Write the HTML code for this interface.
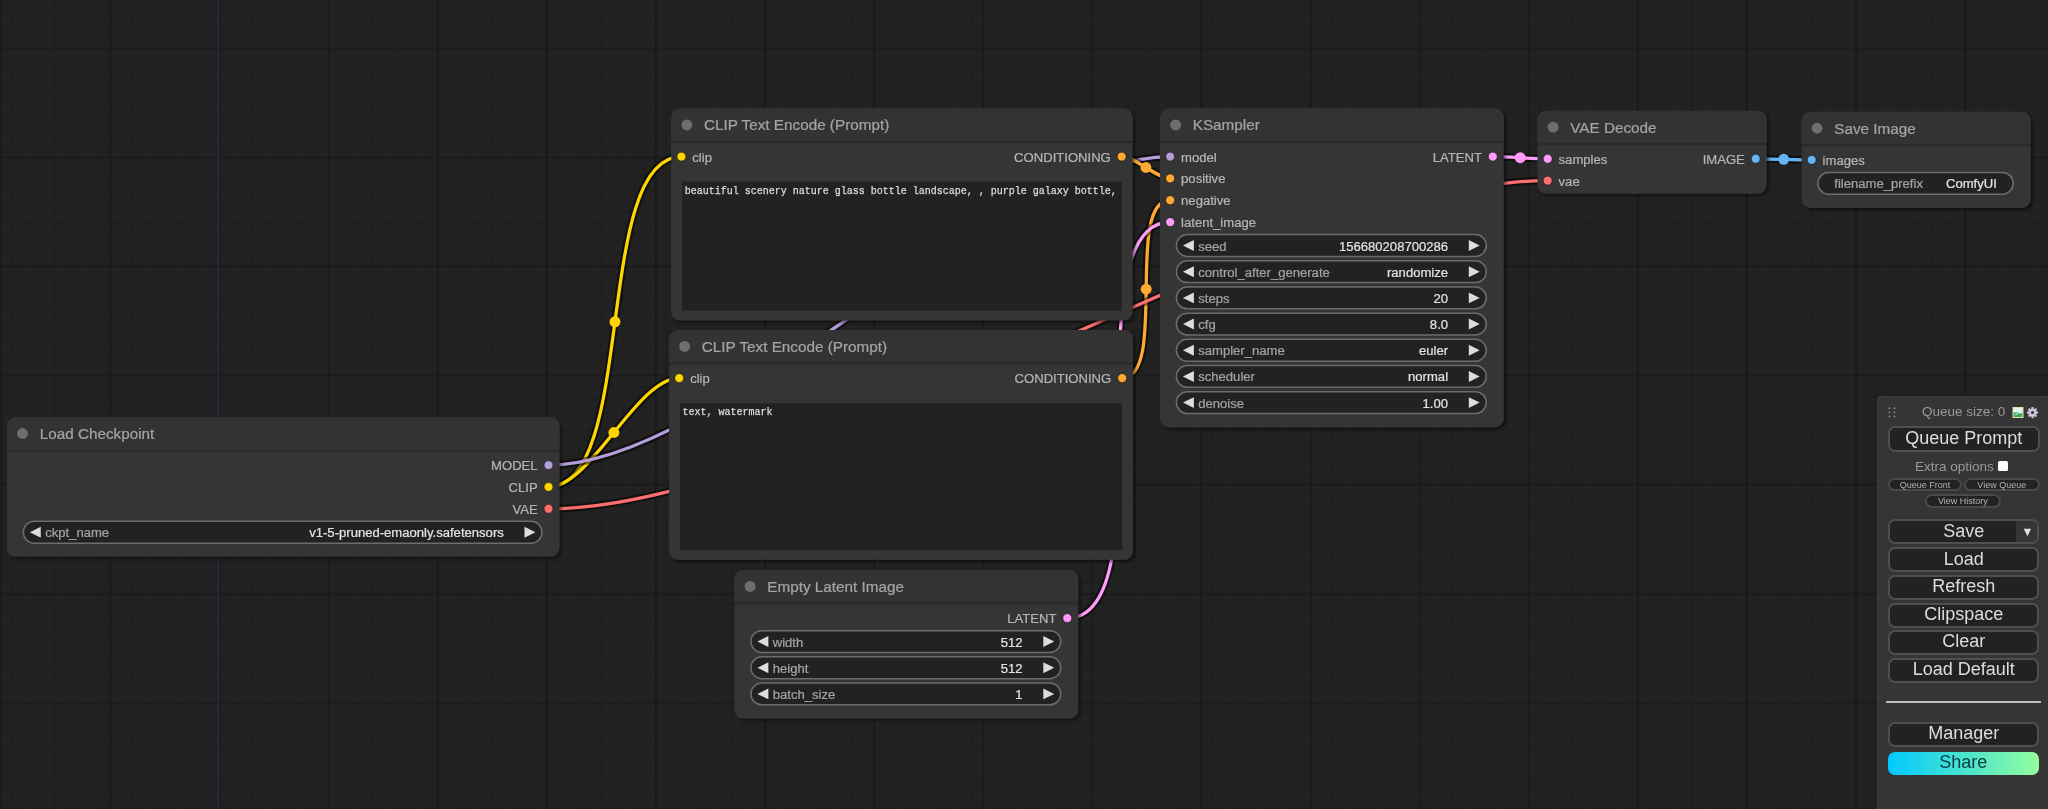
<!DOCTYPE html><html><head><meta charset="utf-8"><style>
html,body{margin:0;padding:0;width:2048px;height:809px;overflow:hidden;background:#222;} body{filter:blur(0.35px);}
svg{position:absolute;left:0;top:0;} .ct{stroke-width:0.22px;paint-order:stroke;}
.menu{position:absolute;font-family:"Liberation Sans",sans-serif;}
</style></head><body>
<svg width="2048" height="809" viewBox="0 0 2048 809">
<defs><filter id="sh" x="-5%" y="-5%" width="110%" height="115%"><feDropShadow dx="2" dy="2" stdDeviation="1.5" flood-color="#000" flood-opacity="0.5"/></filter></defs>
<rect width="2048" height="809" fill="#222"/>
<g><rect x="-21.52" y="0" width="1.09" height="809" fill="#1f1f1f"/><rect x="-10.61" y="0" width="1.09" height="809" fill="#1f1f1f"/><rect x="0.3" y="0" width="1.09" height="809" fill="#1a1a1a"/><rect x="1.39" y="0" width="1.09" height="809" fill="#1b1b1b"/><rect x="11.21" y="0" width="1.09" height="809" fill="#1f1f1f"/><rect x="22.12" y="0" width="1.09" height="809" fill="#1f1f1f"/><rect x="33.03" y="0" width="1.09" height="809" fill="#1f1f1f"/><rect x="43.94" y="0" width="1.09" height="809" fill="#1f1f1f"/><rect x="54.85" y="0" width="1.09" height="809" fill="#1f1f1f"/><rect x="65.76" y="0" width="1.09" height="809" fill="#1f1f1f"/><rect x="76.67" y="0" width="1.09" height="809" fill="#1f1f1f"/><rect x="87.58" y="0" width="1.09" height="809" fill="#1f1f1f"/><rect x="98.49" y="0" width="1.09" height="809" fill="#1f1f1f"/><rect x="109.4" y="0" width="1.09" height="809" fill="#1a1a1a"/><rect x="110.49" y="0" width="1.09" height="809" fill="#1b1b1b"/><rect x="120.31" y="0" width="1.09" height="809" fill="#1f1f1f"/><rect x="131.22" y="0" width="1.09" height="809" fill="#1f1f1f"/><rect x="142.13" y="0" width="1.09" height="809" fill="#1f1f1f"/><rect x="153.04" y="0" width="1.09" height="809" fill="#1f1f1f"/><rect x="163.95" y="0" width="1.09" height="809" fill="#1f1f1f"/><rect x="174.86" y="0" width="1.09" height="809" fill="#1f1f1f"/><rect x="185.77" y="0" width="1.09" height="809" fill="#1f1f1f"/><rect x="196.68" y="0" width="1.09" height="809" fill="#1f1f1f"/><rect x="207.59" y="0" width="1.09" height="809" fill="#1f1f1f"/><rect x="218.5" y="0" width="1.09" height="809" fill="#1a1a1a"/><rect x="219.59" y="0" width="1.09" height="809" fill="#1b1b1b"/><rect x="229.41" y="0" width="1.09" height="809" fill="#1f1f1f"/><rect x="240.32" y="0" width="1.09" height="809" fill="#1f1f1f"/><rect x="251.23" y="0" width="1.09" height="809" fill="#1f1f1f"/><rect x="262.14" y="0" width="1.09" height="809" fill="#1f1f1f"/><rect x="273.05" y="0" width="1.09" height="809" fill="#1f1f1f"/><rect x="283.96" y="0" width="1.09" height="809" fill="#1f1f1f"/><rect x="294.87" y="0" width="1.09" height="809" fill="#1f1f1f"/><rect x="305.78" y="0" width="1.09" height="809" fill="#1f1f1f"/><rect x="316.69" y="0" width="1.09" height="809" fill="#1f1f1f"/><rect x="327.6" y="0" width="1.09" height="809" fill="#1a1a1a"/><rect x="328.69" y="0" width="1.09" height="809" fill="#1b1b1b"/><rect x="338.51" y="0" width="1.09" height="809" fill="#1f1f1f"/><rect x="349.42" y="0" width="1.09" height="809" fill="#1f1f1f"/><rect x="360.33" y="0" width="1.09" height="809" fill="#1f1f1f"/><rect x="371.24" y="0" width="1.09" height="809" fill="#1f1f1f"/><rect x="382.15" y="0" width="1.09" height="809" fill="#1f1f1f"/><rect x="393.06" y="0" width="1.09" height="809" fill="#1f1f1f"/><rect x="403.97" y="0" width="1.09" height="809" fill="#1f1f1f"/><rect x="414.88" y="0" width="1.09" height="809" fill="#1f1f1f"/><rect x="425.79" y="0" width="1.09" height="809" fill="#1f1f1f"/><rect x="436.7" y="0" width="1.09" height="809" fill="#1a1a1a"/><rect x="437.79" y="0" width="1.09" height="809" fill="#1b1b1b"/><rect x="447.61" y="0" width="1.09" height="809" fill="#1f1f1f"/><rect x="458.52" y="0" width="1.09" height="809" fill="#1f1f1f"/><rect x="469.43" y="0" width="1.09" height="809" fill="#1f1f1f"/><rect x="480.34" y="0" width="1.09" height="809" fill="#1f1f1f"/><rect x="491.25" y="0" width="1.09" height="809" fill="#1f1f1f"/><rect x="502.16" y="0" width="1.09" height="809" fill="#1f1f1f"/><rect x="513.07" y="0" width="1.09" height="809" fill="#1f1f1f"/><rect x="523.98" y="0" width="1.09" height="809" fill="#1f1f1f"/><rect x="534.89" y="0" width="1.09" height="809" fill="#1f1f1f"/><rect x="545.8" y="0" width="1.09" height="809" fill="#1a1a1a"/><rect x="546.89" y="0" width="1.09" height="809" fill="#1b1b1b"/><rect x="556.71" y="0" width="1.09" height="809" fill="#1f1f1f"/><rect x="567.62" y="0" width="1.09" height="809" fill="#1f1f1f"/><rect x="578.53" y="0" width="1.09" height="809" fill="#1f1f1f"/><rect x="589.44" y="0" width="1.09" height="809" fill="#1f1f1f"/><rect x="600.35" y="0" width="1.09" height="809" fill="#1f1f1f"/><rect x="611.26" y="0" width="1.09" height="809" fill="#1f1f1f"/><rect x="622.17" y="0" width="1.09" height="809" fill="#1f1f1f"/><rect x="633.08" y="0" width="1.09" height="809" fill="#1f1f1f"/><rect x="643.99" y="0" width="1.09" height="809" fill="#1f1f1f"/><rect x="654.9" y="0" width="1.09" height="809" fill="#1a1a1a"/><rect x="655.99" y="0" width="1.09" height="809" fill="#1b1b1b"/><rect x="665.81" y="0" width="1.09" height="809" fill="#1f1f1f"/><rect x="676.72" y="0" width="1.09" height="809" fill="#1f1f1f"/><rect x="687.63" y="0" width="1.09" height="809" fill="#1f1f1f"/><rect x="698.54" y="0" width="1.09" height="809" fill="#1f1f1f"/><rect x="709.45" y="0" width="1.09" height="809" fill="#1f1f1f"/><rect x="720.36" y="0" width="1.09" height="809" fill="#1f1f1f"/><rect x="731.27" y="0" width="1.09" height="809" fill="#1f1f1f"/><rect x="742.18" y="0" width="1.09" height="809" fill="#1f1f1f"/><rect x="753.09" y="0" width="1.09" height="809" fill="#1f1f1f"/><rect x="764" y="0" width="1.09" height="809" fill="#1a1a1a"/><rect x="765.09" y="0" width="1.09" height="809" fill="#1b1b1b"/><rect x="774.91" y="0" width="1.09" height="809" fill="#1f1f1f"/><rect x="785.82" y="0" width="1.09" height="809" fill="#1f1f1f"/><rect x="796.73" y="0" width="1.09" height="809" fill="#1f1f1f"/><rect x="807.64" y="0" width="1.09" height="809" fill="#1f1f1f"/><rect x="818.55" y="0" width="1.09" height="809" fill="#1f1f1f"/><rect x="829.46" y="0" width="1.09" height="809" fill="#1f1f1f"/><rect x="840.37" y="0" width="1.09" height="809" fill="#1f1f1f"/><rect x="851.28" y="0" width="1.09" height="809" fill="#1f1f1f"/><rect x="862.19" y="0" width="1.09" height="809" fill="#1f1f1f"/><rect x="873.1" y="0" width="1.09" height="809" fill="#1a1a1a"/><rect x="874.19" y="0" width="1.09" height="809" fill="#1b1b1b"/><rect x="884.01" y="0" width="1.09" height="809" fill="#1f1f1f"/><rect x="894.92" y="0" width="1.09" height="809" fill="#1f1f1f"/><rect x="905.83" y="0" width="1.09" height="809" fill="#1f1f1f"/><rect x="916.74" y="0" width="1.09" height="809" fill="#1f1f1f"/><rect x="927.65" y="0" width="1.09" height="809" fill="#1f1f1f"/><rect x="938.56" y="0" width="1.09" height="809" fill="#1f1f1f"/><rect x="949.47" y="0" width="1.09" height="809" fill="#1f1f1f"/><rect x="960.38" y="0" width="1.09" height="809" fill="#1f1f1f"/><rect x="971.29" y="0" width="1.09" height="809" fill="#1f1f1f"/><rect x="982.2" y="0" width="1.09" height="809" fill="#1a1a1a"/><rect x="983.29" y="0" width="1.09" height="809" fill="#1b1b1b"/><rect x="993.11" y="0" width="1.09" height="809" fill="#1f1f1f"/><rect x="1004.02" y="0" width="1.09" height="809" fill="#1f1f1f"/><rect x="1014.93" y="0" width="1.09" height="809" fill="#1f1f1f"/><rect x="1025.84" y="0" width="1.09" height="809" fill="#1f1f1f"/><rect x="1036.75" y="0" width="1.09" height="809" fill="#1f1f1f"/><rect x="1047.66" y="0" width="1.09" height="809" fill="#1f1f1f"/><rect x="1058.57" y="0" width="1.09" height="809" fill="#1f1f1f"/><rect x="1069.48" y="0" width="1.09" height="809" fill="#1f1f1f"/><rect x="1080.39" y="0" width="1.09" height="809" fill="#1f1f1f"/><rect x="1091.3" y="0" width="1.09" height="809" fill="#1a1a1a"/><rect x="1092.39" y="0" width="1.09" height="809" fill="#1b1b1b"/><rect x="1102.21" y="0" width="1.09" height="809" fill="#1f1f1f"/><rect x="1113.12" y="0" width="1.09" height="809" fill="#1f1f1f"/><rect x="1124.03" y="0" width="1.09" height="809" fill="#1f1f1f"/><rect x="1134.94" y="0" width="1.09" height="809" fill="#1f1f1f"/><rect x="1145.85" y="0" width="1.09" height="809" fill="#1f1f1f"/><rect x="1156.76" y="0" width="1.09" height="809" fill="#1f1f1f"/><rect x="1167.67" y="0" width="1.09" height="809" fill="#1f1f1f"/><rect x="1178.58" y="0" width="1.09" height="809" fill="#1f1f1f"/><rect x="1189.49" y="0" width="1.09" height="809" fill="#1f1f1f"/><rect x="1200.4" y="0" width="1.09" height="809" fill="#1a1a1a"/><rect x="1201.49" y="0" width="1.09" height="809" fill="#1b1b1b"/><rect x="1211.31" y="0" width="1.09" height="809" fill="#1f1f1f"/><rect x="1222.22" y="0" width="1.09" height="809" fill="#1f1f1f"/><rect x="1233.13" y="0" width="1.09" height="809" fill="#1f1f1f"/><rect x="1244.04" y="0" width="1.09" height="809" fill="#1f1f1f"/><rect x="1254.95" y="0" width="1.09" height="809" fill="#1f1f1f"/><rect x="1265.86" y="0" width="1.09" height="809" fill="#1f1f1f"/><rect x="1276.77" y="0" width="1.09" height="809" fill="#1f1f1f"/><rect x="1287.68" y="0" width="1.09" height="809" fill="#1f1f1f"/><rect x="1298.59" y="0" width="1.09" height="809" fill="#1f1f1f"/><rect x="1309.5" y="0" width="1.09" height="809" fill="#1a1a1a"/><rect x="1310.59" y="0" width="1.09" height="809" fill="#1b1b1b"/><rect x="1320.41" y="0" width="1.09" height="809" fill="#1f1f1f"/><rect x="1331.32" y="0" width="1.09" height="809" fill="#1f1f1f"/><rect x="1342.23" y="0" width="1.09" height="809" fill="#1f1f1f"/><rect x="1353.14" y="0" width="1.09" height="809" fill="#1f1f1f"/><rect x="1364.05" y="0" width="1.09" height="809" fill="#1f1f1f"/><rect x="1374.96" y="0" width="1.09" height="809" fill="#1f1f1f"/><rect x="1385.87" y="0" width="1.09" height="809" fill="#1f1f1f"/><rect x="1396.78" y="0" width="1.09" height="809" fill="#1f1f1f"/><rect x="1407.69" y="0" width="1.09" height="809" fill="#1f1f1f"/><rect x="1418.6" y="0" width="1.09" height="809" fill="#1a1a1a"/><rect x="1419.69" y="0" width="1.09" height="809" fill="#1b1b1b"/><rect x="1429.51" y="0" width="1.09" height="809" fill="#1f1f1f"/><rect x="1440.42" y="0" width="1.09" height="809" fill="#1f1f1f"/><rect x="1451.33" y="0" width="1.09" height="809" fill="#1f1f1f"/><rect x="1462.24" y="0" width="1.09" height="809" fill="#1f1f1f"/><rect x="1473.15" y="0" width="1.09" height="809" fill="#1f1f1f"/><rect x="1484.06" y="0" width="1.09" height="809" fill="#1f1f1f"/><rect x="1494.97" y="0" width="1.09" height="809" fill="#1f1f1f"/><rect x="1505.88" y="0" width="1.09" height="809" fill="#1f1f1f"/><rect x="1516.79" y="0" width="1.09" height="809" fill="#1f1f1f"/><rect x="1527.7" y="0" width="1.09" height="809" fill="#1a1a1a"/><rect x="1528.79" y="0" width="1.09" height="809" fill="#1b1b1b"/><rect x="1538.61" y="0" width="1.09" height="809" fill="#1f1f1f"/><rect x="1549.52" y="0" width="1.09" height="809" fill="#1f1f1f"/><rect x="1560.43" y="0" width="1.09" height="809" fill="#1f1f1f"/><rect x="1571.34" y="0" width="1.09" height="809" fill="#1f1f1f"/><rect x="1582.25" y="0" width="1.09" height="809" fill="#1f1f1f"/><rect x="1593.16" y="0" width="1.09" height="809" fill="#1f1f1f"/><rect x="1604.07" y="0" width="1.09" height="809" fill="#1f1f1f"/><rect x="1614.98" y="0" width="1.09" height="809" fill="#1f1f1f"/><rect x="1625.89" y="0" width="1.09" height="809" fill="#1f1f1f"/><rect x="1636.8" y="0" width="1.09" height="809" fill="#1a1a1a"/><rect x="1637.89" y="0" width="1.09" height="809" fill="#1b1b1b"/><rect x="1647.71" y="0" width="1.09" height="809" fill="#1f1f1f"/><rect x="1658.62" y="0" width="1.09" height="809" fill="#1f1f1f"/><rect x="1669.53" y="0" width="1.09" height="809" fill="#1f1f1f"/><rect x="1680.44" y="0" width="1.09" height="809" fill="#1f1f1f"/><rect x="1691.35" y="0" width="1.09" height="809" fill="#1f1f1f"/><rect x="1702.26" y="0" width="1.09" height="809" fill="#1f1f1f"/><rect x="1713.17" y="0" width="1.09" height="809" fill="#1f1f1f"/><rect x="1724.08" y="0" width="1.09" height="809" fill="#1f1f1f"/><rect x="1734.99" y="0" width="1.09" height="809" fill="#1f1f1f"/><rect x="1745.9" y="0" width="1.09" height="809" fill="#1a1a1a"/><rect x="1746.99" y="0" width="1.09" height="809" fill="#1b1b1b"/><rect x="1756.81" y="0" width="1.09" height="809" fill="#1f1f1f"/><rect x="1767.72" y="0" width="1.09" height="809" fill="#1f1f1f"/><rect x="1778.63" y="0" width="1.09" height="809" fill="#1f1f1f"/><rect x="1789.54" y="0" width="1.09" height="809" fill="#1f1f1f"/><rect x="1800.45" y="0" width="1.09" height="809" fill="#1f1f1f"/><rect x="1811.36" y="0" width="1.09" height="809" fill="#1f1f1f"/><rect x="1822.27" y="0" width="1.09" height="809" fill="#1f1f1f"/><rect x="1833.18" y="0" width="1.09" height="809" fill="#1f1f1f"/><rect x="1844.09" y="0" width="1.09" height="809" fill="#1f1f1f"/><rect x="1855" y="0" width="1.09" height="809" fill="#1a1a1a"/><rect x="1856.09" y="0" width="1.09" height="809" fill="#1b1b1b"/><rect x="1865.91" y="0" width="1.09" height="809" fill="#1f1f1f"/><rect x="1876.82" y="0" width="1.09" height="809" fill="#1f1f1f"/><rect x="1887.73" y="0" width="1.09" height="809" fill="#1f1f1f"/><rect x="1898.64" y="0" width="1.09" height="809" fill="#1f1f1f"/><rect x="1909.55" y="0" width="1.09" height="809" fill="#1f1f1f"/><rect x="1920.46" y="0" width="1.09" height="809" fill="#1f1f1f"/><rect x="1931.37" y="0" width="1.09" height="809" fill="#1f1f1f"/><rect x="1942.28" y="0" width="1.09" height="809" fill="#1f1f1f"/><rect x="1953.19" y="0" width="1.09" height="809" fill="#1f1f1f"/><rect x="1964.1" y="0" width="1.09" height="809" fill="#1a1a1a"/><rect x="1965.19" y="0" width="1.09" height="809" fill="#1b1b1b"/><rect x="1975.01" y="0" width="1.09" height="809" fill="#1f1f1f"/><rect x="1985.92" y="0" width="1.09" height="809" fill="#1f1f1f"/><rect x="1996.83" y="0" width="1.09" height="809" fill="#1f1f1f"/><rect x="2007.74" y="0" width="1.09" height="809" fill="#1f1f1f"/><rect x="2018.65" y="0" width="1.09" height="809" fill="#1f1f1f"/><rect x="2029.56" y="0" width="1.09" height="809" fill="#1f1f1f"/><rect x="2040.47" y="0" width="1.09" height="809" fill="#1f1f1f"/><rect x="2051.38" y="0" width="1.09" height="809" fill="#1f1f1f"/><rect x="2062.29" y="0" width="1.09" height="809" fill="#1f1f1f"/><rect x="0" y="-17.96" width="2048" height="1.09" fill="#1f1f1f"/><rect x="0" y="-7.05" width="2048" height="1.09" fill="#1f1f1f"/><rect x="0" y="3.86" width="2048" height="1.09" fill="#1f1f1f"/><rect x="0" y="14.77" width="2048" height="1.09" fill="#1f1f1f"/><rect x="0" y="25.68" width="2048" height="1.09" fill="#1f1f1f"/><rect x="0" y="36.59" width="2048" height="1.09" fill="#1f1f1f"/><rect x="0" y="47.5" width="2048" height="1.09" fill="#1a1a1a"/><rect x="0" y="48.59" width="2048" height="1.09" fill="#1e1e1e"/><rect x="0" y="58.41" width="2048" height="1.09" fill="#1f1f1f"/><rect x="0" y="69.32" width="2048" height="1.09" fill="#1f1f1f"/><rect x="0" y="80.23" width="2048" height="1.09" fill="#1f1f1f"/><rect x="0" y="91.14" width="2048" height="1.09" fill="#1f1f1f"/><rect x="0" y="102.05" width="2048" height="1.09" fill="#1f1f1f"/><rect x="0" y="112.96" width="2048" height="1.09" fill="#1f1f1f"/><rect x="0" y="123.87" width="2048" height="1.09" fill="#1f1f1f"/><rect x="0" y="134.78" width="2048" height="1.09" fill="#1f1f1f"/><rect x="0" y="145.69" width="2048" height="1.09" fill="#1f1f1f"/><rect x="0" y="156.6" width="2048" height="1.09" fill="#1a1a1a"/><rect x="0" y="157.69" width="2048" height="1.09" fill="#1e1e1e"/><rect x="0" y="167.51" width="2048" height="1.09" fill="#1f1f1f"/><rect x="0" y="178.42" width="2048" height="1.09" fill="#1f1f1f"/><rect x="0" y="189.33" width="2048" height="1.09" fill="#1f1f1f"/><rect x="0" y="200.24" width="2048" height="1.09" fill="#1f1f1f"/><rect x="0" y="211.15" width="2048" height="1.09" fill="#1f1f1f"/><rect x="0" y="222.06" width="2048" height="1.09" fill="#1f1f1f"/><rect x="0" y="232.97" width="2048" height="1.09" fill="#1f1f1f"/><rect x="0" y="243.88" width="2048" height="1.09" fill="#1f1f1f"/><rect x="0" y="254.79" width="2048" height="1.09" fill="#1f1f1f"/><rect x="0" y="265.7" width="2048" height="1.09" fill="#1a1a1a"/><rect x="0" y="266.79" width="2048" height="1.09" fill="#1e1e1e"/><rect x="0" y="276.61" width="2048" height="1.09" fill="#1f1f1f"/><rect x="0" y="287.52" width="2048" height="1.09" fill="#1f1f1f"/><rect x="0" y="298.43" width="2048" height="1.09" fill="#1f1f1f"/><rect x="0" y="309.34" width="2048" height="1.09" fill="#1f1f1f"/><rect x="0" y="320.25" width="2048" height="1.09" fill="#1f1f1f"/><rect x="0" y="331.16" width="2048" height="1.09" fill="#1f1f1f"/><rect x="0" y="342.07" width="2048" height="1.09" fill="#1f1f1f"/><rect x="0" y="352.98" width="2048" height="1.09" fill="#1f1f1f"/><rect x="0" y="363.89" width="2048" height="1.09" fill="#1f1f1f"/><rect x="0" y="374.8" width="2048" height="1.09" fill="#1a1a1a"/><rect x="0" y="375.89" width="2048" height="1.09" fill="#1e1e1e"/><rect x="0" y="385.71" width="2048" height="1.09" fill="#1f1f1f"/><rect x="0" y="396.62" width="2048" height="1.09" fill="#1f1f1f"/><rect x="0" y="407.53" width="2048" height="1.09" fill="#1f1f1f"/><rect x="0" y="418.44" width="2048" height="1.09" fill="#1f1f1f"/><rect x="0" y="429.35" width="2048" height="1.09" fill="#1f1f1f"/><rect x="0" y="440.26" width="2048" height="1.09" fill="#1f1f1f"/><rect x="0" y="451.17" width="2048" height="1.09" fill="#1f1f1f"/><rect x="0" y="462.08" width="2048" height="1.09" fill="#1f1f1f"/><rect x="0" y="472.99" width="2048" height="1.09" fill="#1f1f1f"/><rect x="0" y="483.9" width="2048" height="1.09" fill="#1a1a1a"/><rect x="0" y="484.99" width="2048" height="1.09" fill="#1e1e1e"/><rect x="0" y="494.81" width="2048" height="1.09" fill="#1f1f1f"/><rect x="0" y="505.72" width="2048" height="1.09" fill="#1f1f1f"/><rect x="0" y="516.63" width="2048" height="1.09" fill="#1f1f1f"/><rect x="0" y="527.54" width="2048" height="1.09" fill="#1f1f1f"/><rect x="0" y="538.45" width="2048" height="1.09" fill="#1f1f1f"/><rect x="0" y="549.36" width="2048" height="1.09" fill="#1f1f1f"/><rect x="0" y="560.27" width="2048" height="1.09" fill="#1f1f1f"/><rect x="0" y="571.18" width="2048" height="1.09" fill="#1f1f1f"/><rect x="0" y="582.09" width="2048" height="1.09" fill="#1f1f1f"/><rect x="0" y="593" width="2048" height="1.09" fill="#1a1a1a"/><rect x="0" y="594.09" width="2048" height="1.09" fill="#1e1e1e"/><rect x="0" y="603.91" width="2048" height="1.09" fill="#1f1f1f"/><rect x="0" y="614.82" width="2048" height="1.09" fill="#1f1f1f"/><rect x="0" y="625.73" width="2048" height="1.09" fill="#1f1f1f"/><rect x="0" y="636.64" width="2048" height="1.09" fill="#1f1f1f"/><rect x="0" y="647.55" width="2048" height="1.09" fill="#1f1f1f"/><rect x="0" y="658.46" width="2048" height="1.09" fill="#1f1f1f"/><rect x="0" y="669.37" width="2048" height="1.09" fill="#1f1f1f"/><rect x="0" y="680.28" width="2048" height="1.09" fill="#1f1f1f"/><rect x="0" y="691.19" width="2048" height="1.09" fill="#1f1f1f"/><rect x="0" y="702.1" width="2048" height="1.09" fill="#1a1a1a"/><rect x="0" y="703.19" width="2048" height="1.09" fill="#1e1e1e"/><rect x="0" y="713.01" width="2048" height="1.09" fill="#1f1f1f"/><rect x="0" y="723.92" width="2048" height="1.09" fill="#1f1f1f"/><rect x="0" y="734.83" width="2048" height="1.09" fill="#1f1f1f"/><rect x="0" y="745.74" width="2048" height="1.09" fill="#1f1f1f"/><rect x="0" y="756.65" width="2048" height="1.09" fill="#1f1f1f"/><rect x="0" y="767.56" width="2048" height="1.09" fill="#1f1f1f"/><rect x="0" y="778.47" width="2048" height="1.09" fill="#1f1f1f"/><rect x="0" y="789.38" width="2048" height="1.09" fill="#1f1f1f"/><rect x="0" y="800.29" width="2048" height="1.09" fill="#1f1f1f"/><rect x="0" y="811.2" width="2048" height="1.09" fill="#1a1a1a"/><rect x="0" y="812.29" width="2048" height="1.09" fill="#1e1e1e"/><rect x="0" y="822.11" width="2048" height="1.09" fill="#1f1f1f"/></g>
<line x1="218.5" y1="0" x2="218.5" y2="809" stroke="#235" stroke-opacity="0.5" stroke-width="2.4" />
<g transform="matrix(1.091 0 0 1.091 218.5 -61.6)">
<path d="M302.5 502.8C384.09 502.8 342.71 200 424.3 200" fill="none" stroke="rgba(0,0,0,0.5)" stroke-width="7" stroke-linejoin="round"/>
<path d="M302.5 502.8C384.09 502.8 342.71 200 424.3 200" fill="none" stroke="#FFD500" stroke-width="3" stroke-linejoin="round"/>
<circle cx="363.4" cy="351.4" r="5" fill="#FFD500"/>
<path d="M302.5 502.8C341.48 502.8 383.32 403 422.3 403" fill="none" stroke="rgba(0,0,0,0.5)" stroke-width="7" stroke-linejoin="round"/>
<path d="M302.5 502.8C341.48 502.8 383.32 403 422.3 403" fill="none" stroke="#FFD500" stroke-width="3" stroke-linejoin="round"/>
<circle cx="362.4" cy="452.9" r="5" fill="#FFD500"/>
<path d="M302.5 482.8C461.53 482.8 713.27 200 872.3 200" fill="none" stroke="rgba(0,0,0,0.5)" stroke-width="7" stroke-linejoin="round"/>
<path d="M302.5 482.8C461.53 482.8 713.27 200 872.3 200" fill="none" stroke="#B39DDB" stroke-width="3" stroke-linejoin="round"/>
<circle cx="587.4" cy="341.4" r="5" fill="#B39DDB"/>
<path d="M827.85 200C840.04 200 860.11 220 872.3 220" fill="none" stroke="rgba(0,0,0,0.5)" stroke-width="7" stroke-linejoin="round"/>
<path d="M827.85 200C840.04 200 860.11 220 872.3 220" fill="none" stroke="#FFA931" stroke-width="3" stroke-linejoin="round"/>
<circle cx="850.07" cy="210" r="5" fill="#FFA931"/>
<path d="M828.28 403C870.49 403 830.09 240 872.3 240" fill="none" stroke="rgba(0,0,0,0.5)" stroke-width="7" stroke-linejoin="round"/>
<path d="M828.28 403C870.49 403 830.09 240 872.3 240" fill="none" stroke="#FFA931" stroke-width="3" stroke-linejoin="round"/>
<circle cx="850.29" cy="321.5" r="5" fill="#FFA931"/>
<path d="M778 623C871.76 623 778.54 260 872.3 260" fill="none" stroke="rgba(0,0,0,0.5)" stroke-width="7" stroke-linejoin="round"/>
<path d="M778 623C871.76 623 778.54 260 872.3 260" fill="none" stroke="#FF9CF9" stroke-width="3" stroke-linejoin="round"/>
<circle cx="825.15" cy="441.5" r="5" fill="#FF9CF9"/>
<path d="M1168 200C1180.58 200 1205.72 202 1218.3 202" fill="none" stroke="rgba(0,0,0,0.5)" stroke-width="7" stroke-linejoin="round"/>
<path d="M1168 200C1180.58 200 1205.72 202 1218.3 202" fill="none" stroke="#FF9CF9" stroke-width="3" stroke-linejoin="round"/>
<circle cx="1193.15" cy="201" r="5" fill="#FF9CF9"/>
<path d="M302.5 522.8C543.48 522.8 977.32 222 1218.3 222" fill="none" stroke="rgba(0,0,0,0.5)" stroke-width="7" stroke-linejoin="round"/>
<path d="M302.5 522.8C543.48 522.8 977.32 222 1218.3 222" fill="none" stroke="#FF6E6E" stroke-width="3" stroke-linejoin="round"/>
<circle cx="760.4" cy="372.4" r="5" fill="#FF6E6E"/>
<path d="M1409 202C1421.83 202 1447.47 203 1460.3 203" fill="none" stroke="rgba(0,0,0,0.5)" stroke-width="7" stroke-linejoin="round"/>
<path d="M1409 202C1421.83 202 1447.47 203 1460.3 203" fill="none" stroke="#64B5F6" stroke-width="3" stroke-linejoin="round"/>
<circle cx="1434.65" cy="202.5" r="5" fill="#64B5F6"/>
<g transform="translate(-193.9 468.8)"><rect x="0" y="-30" width="506.4" height="128" rx="8" ry="8" fill="#353535" filter="url(#sh)"/><path d="M0 0V-22A8 8 0 0 1 8 -30H498.4A8 8 0 0 1 506.4 -22V0Z" fill="#333"/><rect x="0" y="-0.3" width="506.4" height="2" fill="rgba(0,0,0,0.2)"/><circle cx="14.3" cy="-15" r="5" fill="#6e6e6e"/><text x="30" y="-10" font-family='"Liberation Sans", sans-serif' font-size="14" fill="#a3a3a3" stroke="#a3a3a3" class="ct">Load Checkpoint</text><circle cx="496.4" cy="14" r="4.05" fill="#B39DDB" stroke="rgba(0,0,0,0.5)" stroke-width="0.8"/><text x="486.4" y="18.6" text-anchor="end" font-family='"Liberation Sans", sans-serif' font-size="12" fill="#b4b4b4" stroke="#b4b4b4" class="ct">MODEL</text><circle cx="496.4" cy="34" r="4.05" fill="#FFD500" stroke="rgba(0,0,0,0.5)" stroke-width="0.8"/><text x="486.4" y="38.6" text-anchor="end" font-family='"Liberation Sans", sans-serif' font-size="12" fill="#b4b4b4" stroke="#b4b4b4" class="ct">CLIP</text><circle cx="496.4" cy="54" r="4.05" fill="#FF6E6E" stroke="rgba(0,0,0,0.5)" stroke-width="0.8"/><text x="486.4" y="58.6" text-anchor="end" font-family='"Liberation Sans", sans-serif' font-size="12" fill="#b4b4b4" stroke="#b4b4b4" class="ct">VAE</text><rect x="15" y="65.5" width="475.4" height="20" rx="10" ry="10" fill="#222" stroke="#6c6c6c" stroke-width="1.4"/><path d="M31 70.5L21 75.5L31 80.5Z" fill="#DDD"/><path d="M474.4 70.5L484.4 75.5L474.4 80.5Z" fill="#DDD"/><text x="35" y="80.1" font-family='"Liberation Sans", sans-serif' font-size="12" fill="#a3a3a3" stroke="#a3a3a3" class="ct">ckpt_name</text><text x="455.4" y="80.1" text-anchor="end" font-family='"Liberation Sans", sans-serif' font-size="12" fill="#e2e2e2" stroke="#e2e2e2" class="ct">v1-5-pruned-emaonly.safetensors</text></g>
<g transform="translate(473 609)"><rect x="0" y="-30" width="315" height="136" rx="8" ry="8" fill="#353535" filter="url(#sh)"/><path d="M0 0V-22A8 8 0 0 1 8 -30H307A8 8 0 0 1 315 -22V0Z" fill="#333"/><rect x="0" y="-0.3" width="315" height="2" fill="rgba(0,0,0,0.2)"/><circle cx="14.3" cy="-15" r="5" fill="#6e6e6e"/><text x="30" y="-10" font-family='"Liberation Sans", sans-serif' font-size="14" fill="#a3a3a3" stroke="#a3a3a3" class="ct">Empty Latent Image</text><circle cx="305" cy="14" r="4.05" fill="#FF9CF9" stroke="rgba(0,0,0,0.5)" stroke-width="0.8"/><text x="295" y="18.6" text-anchor="end" font-family='"Liberation Sans", sans-serif' font-size="12" fill="#b4b4b4" stroke="#b4b4b4" class="ct">LATENT</text><rect x="15" y="25.5" width="284" height="20" rx="10" ry="10" fill="#222" stroke="#6c6c6c" stroke-width="1.4"/><path d="M31 30.5L21 35.5L31 40.5Z" fill="#DDD"/><path d="M283 30.5L293 35.5L283 40.5Z" fill="#DDD"/><text x="35" y="40.1" font-family='"Liberation Sans", sans-serif' font-size="12" fill="#a3a3a3" stroke="#a3a3a3" class="ct">width</text><text x="264" y="40.1" text-anchor="end" font-family='"Liberation Sans", sans-serif' font-size="12" fill="#e2e2e2" stroke="#e2e2e2" class="ct">512</text><rect x="15" y="49.5" width="284" height="20" rx="10" ry="10" fill="#222" stroke="#6c6c6c" stroke-width="1.4"/><path d="M31 54.5L21 59.5L31 64.5Z" fill="#DDD"/><path d="M283 54.5L293 59.5L283 64.5Z" fill="#DDD"/><text x="35" y="64.1" font-family='"Liberation Sans", sans-serif' font-size="12" fill="#a3a3a3" stroke="#a3a3a3" class="ct">height</text><text x="264" y="64.1" text-anchor="end" font-family='"Liberation Sans", sans-serif' font-size="12" fill="#e2e2e2" stroke="#e2e2e2" class="ct">512</text><rect x="15" y="73.5" width="284" height="20" rx="10" ry="10" fill="#222" stroke="#6c6c6c" stroke-width="1.4"/><path d="M31 78.5L21 83.5L31 88.5Z" fill="#DDD"/><path d="M283 78.5L293 83.5L283 88.5Z" fill="#DDD"/><text x="35" y="88.1" font-family='"Liberation Sans", sans-serif' font-size="12" fill="#a3a3a3" stroke="#a3a3a3" class="ct">batch_size</text><text x="264" y="88.1" text-anchor="end" font-family='"Liberation Sans", sans-serif' font-size="12" fill="#e2e2e2" stroke="#e2e2e2" class="ct">1</text></g>
<g transform="translate(415 186)"><rect x="0" y="-30" width="422.85" height="194.31" rx="8" ry="8" fill="#353535" filter="url(#sh)"/><path d="M0 0V-22A8 8 0 0 1 8 -30H414.85A8 8 0 0 1 422.85 -22V0Z" fill="#333"/><rect x="0" y="-0.3" width="422.85" height="2" fill="rgba(0,0,0,0.2)"/><circle cx="14.3" cy="-15" r="5" fill="#6e6e6e"/><text x="30" y="-10" font-family='"Liberation Sans", sans-serif' font-size="14" fill="#a3a3a3" stroke="#a3a3a3" class="ct">CLIP Text Encode (Prompt)</text><circle cx="9.3" cy="14" r="4.05" fill="#FFD500" stroke="rgba(0,0,0,0.5)" stroke-width="0.8"/><text x="19.3" y="18.6" font-family='"Liberation Sans", sans-serif' font-size="12" fill="#b4b4b4" stroke="#b4b4b4" class="ct">clip</text><circle cx="412.85" cy="14" r="4.05" fill="#FFA931" stroke="rgba(0,0,0,0.5)" stroke-width="0.8"/><text x="402.85" y="18.6" text-anchor="end" font-family='"Liberation Sans", sans-serif' font-size="12" fill="#b4b4b4" stroke="#b4b4b4" class="ct">CONDITIONING</text><rect x="10" y="37" width="402.85" height="118.31" fill="#222"/></g>
<g transform="translate(413 389)"><rect x="0" y="-30" width="425.28" height="210.61" rx="8" ry="8" fill="#353535" filter="url(#sh)"/><path d="M0 0V-22A8 8 0 0 1 8 -30H417.28A8 8 0 0 1 425.28 -22V0Z" fill="#333"/><rect x="0" y="-0.3" width="425.28" height="2" fill="rgba(0,0,0,0.2)"/><circle cx="14.3" cy="-15" r="5" fill="#6e6e6e"/><text x="30" y="-10" font-family='"Liberation Sans", sans-serif' font-size="14" fill="#a3a3a3" stroke="#a3a3a3" class="ct">CLIP Text Encode (Prompt)</text><circle cx="9.3" cy="14" r="4.05" fill="#FFD500" stroke="rgba(0,0,0,0.5)" stroke-width="0.8"/><text x="19.3" y="18.6" font-family='"Liberation Sans", sans-serif' font-size="12" fill="#b4b4b4" stroke="#b4b4b4" class="ct">clip</text><circle cx="415.28" cy="14" r="4.05" fill="#FFA931" stroke="rgba(0,0,0,0.5)" stroke-width="0.8"/><text x="405.28" y="18.6" text-anchor="end" font-family='"Liberation Sans", sans-serif' font-size="12" fill="#b4b4b4" stroke="#b4b4b4" class="ct">CONDITIONING</text><rect x="10" y="37" width="405.28" height="134.61" fill="#222"/></g>
<g transform="translate(863 186)"><rect x="0" y="-30" width="315" height="292" rx="8" ry="8" fill="#353535" filter="url(#sh)"/><path d="M0 0V-22A8 8 0 0 1 8 -30H307A8 8 0 0 1 315 -22V0Z" fill="#333"/><rect x="0" y="-0.3" width="315" height="2" fill="rgba(0,0,0,0.2)"/><circle cx="14.3" cy="-15" r="5" fill="#6e6e6e"/><text x="30" y="-10" font-family='"Liberation Sans", sans-serif' font-size="14" fill="#a3a3a3" stroke="#a3a3a3" class="ct">KSampler</text><circle cx="9.3" cy="14" r="4.05" fill="#B39DDB" stroke="rgba(0,0,0,0.5)" stroke-width="0.8"/><text x="19.3" y="18.6" font-family='"Liberation Sans", sans-serif' font-size="12" fill="#b4b4b4" stroke="#b4b4b4" class="ct">model</text><circle cx="9.3" cy="34" r="4.05" fill="#FFA931" stroke="rgba(0,0,0,0.5)" stroke-width="0.8"/><text x="19.3" y="38.6" font-family='"Liberation Sans", sans-serif' font-size="12" fill="#b4b4b4" stroke="#b4b4b4" class="ct">positive</text><circle cx="9.3" cy="54" r="4.05" fill="#FFA931" stroke="rgba(0,0,0,0.5)" stroke-width="0.8"/><text x="19.3" y="58.6" font-family='"Liberation Sans", sans-serif' font-size="12" fill="#b4b4b4" stroke="#b4b4b4" class="ct">negative</text><circle cx="9.3" cy="74" r="4.05" fill="#FF9CF9" stroke="rgba(0,0,0,0.5)" stroke-width="0.8"/><text x="19.3" y="78.6" font-family='"Liberation Sans", sans-serif' font-size="12" fill="#b4b4b4" stroke="#b4b4b4" class="ct">latent_image</text><circle cx="305" cy="14" r="4.05" fill="#FF9CF9" stroke="rgba(0,0,0,0.5)" stroke-width="0.8"/><text x="295" y="18.6" text-anchor="end" font-family='"Liberation Sans", sans-serif' font-size="12" fill="#b4b4b4" stroke="#b4b4b4" class="ct">LATENT</text><rect x="15" y="85.5" width="284" height="20" rx="10" ry="10" fill="#222" stroke="#6c6c6c" stroke-width="1.4"/><path d="M31 90.5L21 95.5L31 100.5Z" fill="#DDD"/><path d="M283 90.5L293 95.5L283 100.5Z" fill="#DDD"/><text x="35" y="100.1" font-family='"Liberation Sans", sans-serif' font-size="12" fill="#a3a3a3" stroke="#a3a3a3" class="ct">seed</text><text x="264" y="100.1" text-anchor="end" font-family='"Liberation Sans", sans-serif' font-size="12" fill="#e2e2e2" stroke="#e2e2e2" class="ct">156680208700286</text><rect x="15" y="109.5" width="284" height="20" rx="10" ry="10" fill="#222" stroke="#6c6c6c" stroke-width="1.4"/><path d="M31 114.5L21 119.5L31 124.5Z" fill="#DDD"/><path d="M283 114.5L293 119.5L283 124.5Z" fill="#DDD"/><text x="35" y="124.1" font-family='"Liberation Sans", sans-serif' font-size="12" fill="#a3a3a3" stroke="#a3a3a3" class="ct">control_after_generate</text><text x="264" y="124.1" text-anchor="end" font-family='"Liberation Sans", sans-serif' font-size="12" fill="#e2e2e2" stroke="#e2e2e2" class="ct">randomize</text><rect x="15" y="133.5" width="284" height="20" rx="10" ry="10" fill="#222" stroke="#6c6c6c" stroke-width="1.4"/><path d="M31 138.5L21 143.5L31 148.5Z" fill="#DDD"/><path d="M283 138.5L293 143.5L283 148.5Z" fill="#DDD"/><text x="35" y="148.1" font-family='"Liberation Sans", sans-serif' font-size="12" fill="#a3a3a3" stroke="#a3a3a3" class="ct">steps</text><text x="264" y="148.1" text-anchor="end" font-family='"Liberation Sans", sans-serif' font-size="12" fill="#e2e2e2" stroke="#e2e2e2" class="ct">20</text><rect x="15" y="157.5" width="284" height="20" rx="10" ry="10" fill="#222" stroke="#6c6c6c" stroke-width="1.4"/><path d="M31 162.5L21 167.5L31 172.5Z" fill="#DDD"/><path d="M283 162.5L293 167.5L283 172.5Z" fill="#DDD"/><text x="35" y="172.1" font-family='"Liberation Sans", sans-serif' font-size="12" fill="#a3a3a3" stroke="#a3a3a3" class="ct">cfg</text><text x="264" y="172.1" text-anchor="end" font-family='"Liberation Sans", sans-serif' font-size="12" fill="#e2e2e2" stroke="#e2e2e2" class="ct">8.0</text><rect x="15" y="181.5" width="284" height="20" rx="10" ry="10" fill="#222" stroke="#6c6c6c" stroke-width="1.4"/><path d="M31 186.5L21 191.5L31 196.5Z" fill="#DDD"/><path d="M283 186.5L293 191.5L283 196.5Z" fill="#DDD"/><text x="35" y="196.1" font-family='"Liberation Sans", sans-serif' font-size="12" fill="#a3a3a3" stroke="#a3a3a3" class="ct">sampler_name</text><text x="264" y="196.1" text-anchor="end" font-family='"Liberation Sans", sans-serif' font-size="12" fill="#e2e2e2" stroke="#e2e2e2" class="ct">euler</text><rect x="15" y="205.5" width="284" height="20" rx="10" ry="10" fill="#222" stroke="#6c6c6c" stroke-width="1.4"/><path d="M31 210.5L21 215.5L31 220.5Z" fill="#DDD"/><path d="M283 210.5L293 215.5L283 220.5Z" fill="#DDD"/><text x="35" y="220.1" font-family='"Liberation Sans", sans-serif' font-size="12" fill="#a3a3a3" stroke="#a3a3a3" class="ct">scheduler</text><text x="264" y="220.1" text-anchor="end" font-family='"Liberation Sans", sans-serif' font-size="12" fill="#e2e2e2" stroke="#e2e2e2" class="ct">normal</text><rect x="15" y="229.5" width="284" height="20" rx="10" ry="10" fill="#222" stroke="#6c6c6c" stroke-width="1.4"/><path d="M31 234.5L21 239.5L31 244.5Z" fill="#DDD"/><path d="M283 234.5L293 239.5L283 244.5Z" fill="#DDD"/><text x="35" y="244.1" font-family='"Liberation Sans", sans-serif' font-size="12" fill="#a3a3a3" stroke="#a3a3a3" class="ct">denoise</text><text x="264" y="244.1" text-anchor="end" font-family='"Liberation Sans", sans-serif' font-size="12" fill="#e2e2e2" stroke="#e2e2e2" class="ct">1.00</text></g>
<g transform="translate(1209 188)"><rect x="0" y="-30" width="210" height="76" rx="8" ry="8" fill="#353535" filter="url(#sh)"/><path d="M0 0V-22A8 8 0 0 1 8 -30H202A8 8 0 0 1 210 -22V0Z" fill="#333"/><rect x="0" y="-0.3" width="210" height="2" fill="rgba(0,0,0,0.2)"/><circle cx="14.3" cy="-15" r="5" fill="#6e6e6e"/><text x="30" y="-10" font-family='"Liberation Sans", sans-serif' font-size="14" fill="#a3a3a3" stroke="#a3a3a3" class="ct">VAE Decode</text><circle cx="9.3" cy="14" r="4.05" fill="#FF9CF9" stroke="rgba(0,0,0,0.5)" stroke-width="0.8"/><text x="19.3" y="18.6" font-family='"Liberation Sans", sans-serif' font-size="12" fill="#b4b4b4" stroke="#b4b4b4" class="ct">samples</text><circle cx="9.3" cy="34" r="4.05" fill="#FF6E6E" stroke="rgba(0,0,0,0.5)" stroke-width="0.8"/><text x="19.3" y="38.6" font-family='"Liberation Sans", sans-serif' font-size="12" fill="#b4b4b4" stroke="#b4b4b4" class="ct">vae</text><circle cx="200" cy="14" r="4.05" fill="#64B5F6" stroke="rgba(0,0,0,0.5)" stroke-width="0.8"/><text x="190" y="18.6" text-anchor="end" font-family='"Liberation Sans", sans-serif' font-size="12" fill="#b4b4b4" stroke="#b4b4b4" class="ct">IMAGE</text></g>
<g transform="translate(1451 189)"><rect x="0" y="-30" width="210" height="88" rx="8" ry="8" fill="#353535" filter="url(#sh)"/><path d="M0 0V-22A8 8 0 0 1 8 -30H202A8 8 0 0 1 210 -22V0Z" fill="#333"/><rect x="0" y="-0.3" width="210" height="2" fill="rgba(0,0,0,0.2)"/><circle cx="14.3" cy="-15" r="5" fill="#6e6e6e"/><text x="30" y="-10" font-family='"Liberation Sans", sans-serif' font-size="14" fill="#a3a3a3" stroke="#a3a3a3" class="ct">Save Image</text><circle cx="9.3" cy="14" r="4.05" fill="#64B5F6" stroke="rgba(0,0,0,0.5)" stroke-width="0.8"/><text x="19.3" y="18.6" font-family='"Liberation Sans", sans-serif' font-size="12" fill="#b4b4b4" stroke="#b4b4b4" class="ct">images</text><rect x="15" y="25.5" width="179" height="20" rx="10" ry="10" fill="#222" stroke="#6c6c6c" stroke-width="1.4"/><text x="30" y="40.1" font-family='"Liberation Sans", sans-serif' font-size="12" fill="#a3a3a3" stroke="#a3a3a3" class="ct">filename_prefix</text><text x="179" y="40.1" text-anchor="end" font-family='"Liberation Sans", sans-serif' font-size="12" fill="#e2e2e2" stroke="#e2e2e2" class="ct">ComfyUI</text></g>
</g>
<text x="684.77" y="194.09" font-family='"Liberation Mono", monospace' font-size="10" fill="#DDD" stroke="#DDD" stroke-width="0.25" paint-order="stroke" xml:space="preserve">beautiful scenery nature glass bottle landscape, , purple galaxy bottle,</text>
<text x="682.59" y="414.57" font-family='"Liberation Mono", monospace' font-size="10" fill="#DDD" stroke="#DDD" stroke-width="0.25" paint-order="stroke" xml:space="preserve">text, watermark</text>
</svg>
<div class="menu" style="left:1877px;top:396px;width:171px;height:430px;background:#353535;border-radius:4px 0 0 4px;box-shadow:3px 3px 7px rgba(0,0,0,0.4);"></div>
<div class="menu" style="left:1877px;top:396px;width:171px;height:430px;border:1px solid #3e3e3e;border-right:none;box-sizing:border-box;border-radius:4px 0 0 4px;"></div>
<svg width="2048" height="809" style="position:absolute;left:0;top:0">
<g fill="#8a8a8a">
<circle cx="1889.4" cy="408.2" r="0.9"/><circle cx="1894.4" cy="408.2" r="0.9"/>
<circle cx="1889.4" cy="412.3" r="0.9"/><circle cx="1894.4" cy="412.3" r="0.9"/>
<circle cx="1889.4" cy="416.4" r="0.9"/><circle cx="1894.4" cy="416.4" r="0.9"/>
</g>
<text x="1922" y="416" font-family='"Liberation Sans", sans-serif' font-size="13.5" fill="#999">Queue size: 0</text>
<!-- image icon -->
<rect x="2012.5" y="407" width="11" height="11" fill="#e6dcae"/>
<rect x="2013.6" y="408.1" width="8.8" height="8.8" fill="#e4f6ee"/>
<path d="M2013.6 412.8 Q2016.5 411.5 2019 413 T2022.4 412.6 V416.9 H2013.6Z" fill="#3aa65a"/>
<path d="M2014.5 415 Q2018 411.5 2022.4 410.2 V411.8 Q2018.5 413 2016 415.5Z" fill="#b8ecec" opacity="0.8"/>
<!-- gear -->
<g transform="translate(2032.5 412.6)">
<g fill="#cdc4dc">
<circle r="3.9"/>
<rect x="-1.15" y="-5.5" width="2.3" height="11"/>
<rect x="-1.15" y="-5.5" width="2.3" height="11" transform="rotate(45)"/>
<rect x="-1.15" y="-5.5" width="2.3" height="11" transform="rotate(90)"/>
<rect x="-1.15" y="-5.5" width="2.3" height="11" transform="rotate(135)"/>
</g>
<circle r="1.5" fill="#2e2836"/>
</g>
</svg>
<style>
.btn{position:absolute;box-sizing:border-box;background:#222;border:2px solid #4f4f4f;border-radius:7px;color:#ddd;font-family:"Liberation Sans",sans-serif;display:flex;align-items:center;justify-content:center;white-space:nowrap;}
.big{font-size:18px;padding-bottom:1.5px;}
.sm{font-size:9px;color:#b4b4b4;border-width:2px;border-color:#4a4a4a;border-radius:7px;}
</style>
<div class="btn big" style="left:1887.7px;top:426.2px;width:152px;height:26px;">Queue Prompt</div>
<div class="menu" style="left:1915px;top:459px;font-size:13.5px;color:#999;">Extra options</div>
<div class="menu" style="left:1998px;top:461px;width:10px;height:10px;background:#fff;border-radius:1.5px;"></div>
<div class="btn sm" style="left:1887.8px;top:477.9px;width:74.2px;height:13.5px;">Queue Front</div>
<div class="btn sm" style="left:1964px;top:477.9px;width:75.6px;height:13.5px;">View Queue</div>
<div class="btn sm" style="left:1925.1px;top:493.9px;width:75.5px;height:13.9px;">View History</div>
<div class="btn big" style="left:1888px;top:519.3px;width:151.4px;height:25px;overflow:hidden;"><span>Save</span><div style="position:absolute;right:0;top:0;width:21px;height:100%;background:#353535;display:flex;align-items:center;justify-content:center;font-size:12.5px;padding-left:1px;box-sizing:border-box;">&#9660;</div></div>
<div class="btn big" style="left:1888px;top:547.4px;width:151.4px;height:25px;">Load</div>
<div class="btn big" style="left:1888px;top:575.1px;width:151.4px;height:25px;">Refresh</div>
<div class="btn big" style="left:1888px;top:602.6px;width:151.4px;height:25px;">Clipspace</div>
<div class="btn big" style="left:1888px;top:630.1px;width:151.4px;height:25px;">Clear</div>
<div class="btn big" style="left:1888px;top:657.8px;width:151.4px;height:25px;">Load Default</div>
<div class="menu" style="left:1886.3px;top:700.8px;width:154.7px;height:2px;background:#bdbdbd;"></div>
<div class="btn big" style="left:1888px;top:722px;width:151.4px;height:25px;">Manager</div>
<div class="btn big" style="left:1888px;top:751.5px;width:150.6px;height:23.5px;border:none;background:linear-gradient(90deg,#00C9FF 0%,#92FE9D 100%);color:#0a3c44;">Share</div>

</body></html>
